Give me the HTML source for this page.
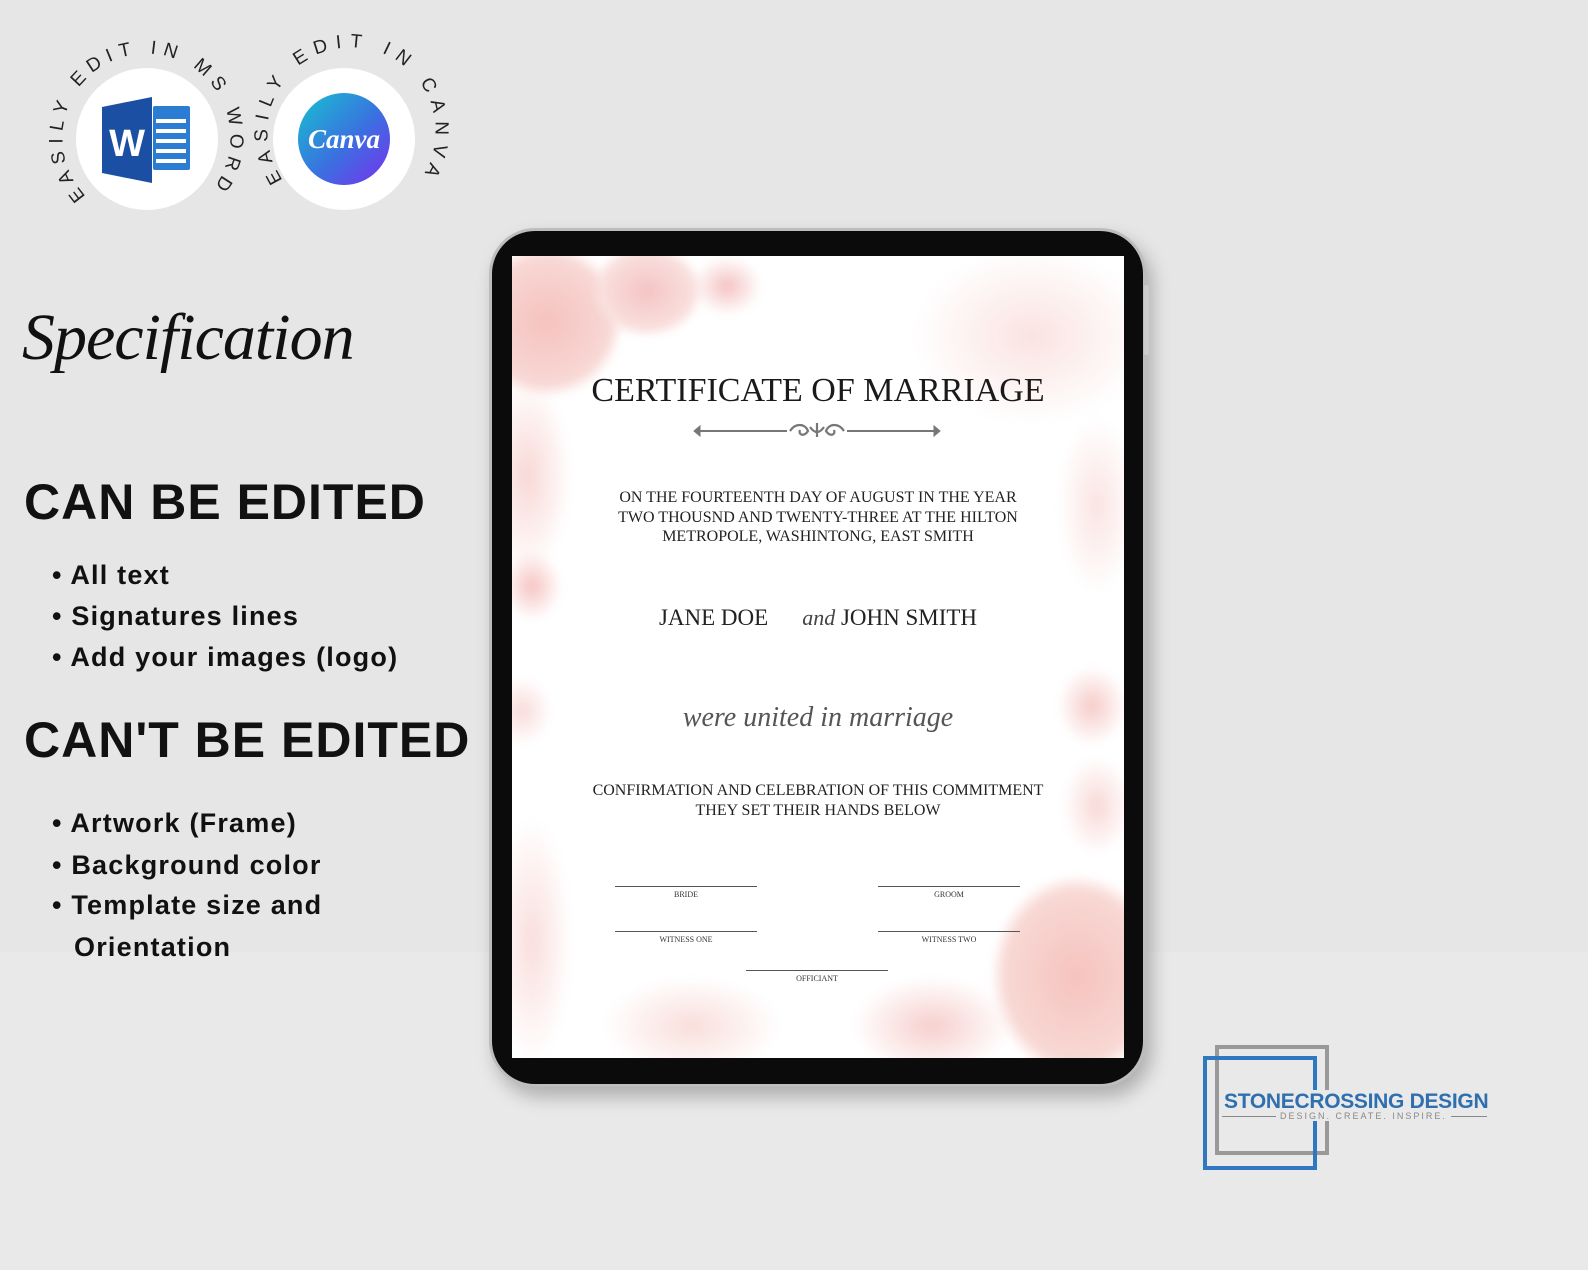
<!DOCTYPE html>
<html><head><meta charset="utf-8">
<style>
*{margin:0;padding:0;box-sizing:border-box}
body{width:1588px;height:1270px;overflow:hidden;background:#e6e6e6;font-family:"Liberation Sans",sans-serif;position:relative}
.floor{position:absolute;left:0;top:952px;width:1588px;height:318px;background:#e9e9e9}
.abs{position:absolute}
.h{font-weight:bold;font-size:50px;letter-spacing:1px;color:#111;left:24px}
.b{font-size:27px;color:#111;left:52px;letter-spacing:1.2px;font-weight:bold}
.tab{left:489px;top:228px;width:657px;height:859px;background:#0b0b0b;border-radius:46px;box-shadow:6px 10px 18px rgba(0,0,0,.25);border:3px solid #bdbdbd}
.scr{left:512px;top:256px;width:612px;height:802px;background:#fff;overflow:hidden}
.serif{font-family:"Liberation Serif",serif;color:#222;text-align:center;position:absolute;width:612px;left:0}
.fl{position:absolute;border-radius:50%;filter:blur(4px)}
.line{position:absolute;border-top:1px solid #555;width:142px}
.lab{position:absolute;font-family:"Liberation Serif",serif;font-size:8px;color:#333;width:142px;text-align:center}
</style></head><body>
<div class="floor"></div>

<svg class="abs" style="left:30px;top:20px" width="450" height="210" viewBox="30 20 450 210">
<defs>
<path id="c1" d="M86,196 A84,84 0 1,1 212,190"/>
<path id="c2" d="M283,180 A84,84 0 1,1 420,180"/>
<linearGradient id="cg" x1="0" y1="0" x2="1" y2="1"><stop offset="0" stop-color="#16c3cf"/><stop offset=".55" stop-color="#3b6fe0"/><stop offset="1" stop-color="#7a2ff0"/></linearGradient>
</defs>
<circle cx="147" cy="139" r="71" fill="#fff"/>
<circle cx="344" cy="139" r="71" fill="#fff"/>
<text font-family="Liberation Sans" font-size="19" letter-spacing="6.8" fill="#222"><textPath href="#c1">EASILY EDIT IN MS WORD</textPath></text>
<text font-family="Liberation Sans" font-size="19" letter-spacing="8" fill="#222"><textPath href="#c2">EASILY EDIT IN CANVA</textPath></text>
<rect x="153" y="106" width="37" height="64" rx="2" fill="#2b7cd3"/>
<g fill="#fff"><rect x="156" y="119" width="30" height="4"/><rect x="156" y="129" width="30" height="4"/><rect x="156" y="139" width="30" height="4"/><rect x="156" y="149" width="30" height="4"/><rect x="156" y="159" width="30" height="4"/></g>
<polygon points="102,107 152,97 152,183 102,173" fill="#1a4fa3"/>
<text x="127" y="156" text-anchor="middle" font-family="Liberation Sans" font-weight="bold" font-size="38" fill="#fff">W</text>
<circle cx="344" cy="139" r="46" fill="url(#cg)"/>
<text x="344" y="148" text-anchor="middle" font-family="Liberation Serif" font-style="italic" font-weight="bold" font-size="27" fill="#fff">Canva</text>
</svg>

<div class="abs" style="left:22px;top:300px;font-family:'Liberation Serif',serif;font-style:italic;font-size:66px;color:#111;letter-spacing:-1px">Specification</div>
<div class="abs h" style="top:473px">CAN BE EDITED</div>
<div class="abs b" style="top:560px">• All text</div>
<div class="abs b" style="top:601px">• Signatures lines</div>
<div class="abs b" style="top:642px">• Add your images (logo)</div>
<div class="abs h" style="top:711px">CAN'T BE EDITED</div>
<div class="abs b" style="top:808px">• Artwork (Frame)</div>
<div class="abs b" style="top:850px">• Background color</div>
<div class="abs b" style="top:890px">• Template size and</div>
<div class="abs b" style="top:932px;left:74px">Orientation</div>

<div class="abs tab"></div>
<div class="abs" style="left:1144px;top:285px;width:5px;height:70px;background:#ccc;border-radius:2px"></div>
<div class="abs scr">
  <div class="fl" style="left:-40px;top:-10px;width:150px;height:150px;background:radial-gradient(#f5c2bf,#f8d8d5 60%,rgba(255,255,255,0) 72%)"></div>
  <div class="fl" style="left:80px;top:-10px;width:110px;height:90px;background:radial-gradient(#f4c4c4,#f9e0de 60%,rgba(255,255,255,0) 72%)"></div>
  <div class="fl" style="left:180px;top:0;width:70px;height:60px;background:radial-gradient(#f4c2c1,rgba(255,255,255,0) 70%)"></div>
  <div class="fl" style="left:-30px;top:120px;width:90px;height:200px;background:radial-gradient(#f8d8d5,rgba(255,255,255,0) 70%)"></div>
  <div class="fl" style="left:-10px;top:295px;width:60px;height:70px;background:radial-gradient(#f5c4c1,rgba(255,255,255,0) 70%)"></div>
  <div class="fl" style="left:-20px;top:420px;width:60px;height:70px;background:radial-gradient(#f8dbd9,rgba(255,255,255,0) 70%)"></div>
  <div class="fl" style="left:-20px;top:560px;width:80px;height:250px;background:radial-gradient(#f9dedc,rgba(255,255,255,0) 70%)"></div>
  <div class="fl" style="left:90px;top:720px;width:180px;height:100px;background:radial-gradient(#f9dedb,rgba(255,255,255,0) 70%)"></div>
  <div class="fl" style="left:340px;top:720px;width:160px;height:100px;background:radial-gradient(#f6cfcd,rgba(255,255,255,0) 70%)"></div>
  <div class="fl" style="left:480px;top:620px;width:170px;height:200px;background:radial-gradient(#f5c3bf,#f8d8d4 60%,rgba(255,255,255,0) 72%)"></div>
  <div class="fl" style="left:400px;top:-10px;width:240px;height:180px;background:radial-gradient(#fae3e1,rgba(255,255,255,0) 70%)"></div>
  <div class="fl" style="left:545px;top:160px;width:80px;height:180px;background:radial-gradient(#fae4e2,rgba(255,255,255,0) 70%)"></div>
  <div class="fl" style="left:545px;top:410px;width:70px;height:80px;background:radial-gradient(#f6cbc8,rgba(255,255,255,0) 70%)"></div>
  <div class="fl" style="left:550px;top:500px;width:70px;height:100px;background:radial-gradient(#f8d9d7,rgba(255,255,255,0) 70%)"></div>
  <div class="serif" style="top:116px;font-size:34px;color:#1a1a1a">CERTIFICATE OF MARRIAGE</div>
  <svg class="abs" style="left:180px;top:165px" width="250" height="20"><g fill="#777" stroke="#777"><line x1="6" y1="10" x2="95" y2="10" stroke-width="2"/><line x1="155" y1="10" x2="244" y2="10" stroke-width="2"/><polygon points="2,10 8,5 8,15"/><polygon points="248,10 242,5 242,15"/><path d="M98,10 c5,-8 15,-8 18,0 c-4,6 -10,4 -8,-1 M152,10 c-5,-8 -15,-8 -18,0 c4,6 10,4 8,-1 M118,6 q7,10 14,0 M125,2 v14" fill="none" stroke-width="2.2"/></g></svg>
  <div class="serif" style="top:232px;font-size:16px;line-height:19.5px">ON THE FOURTEENTH DAY OF AUGUST IN THE YEAR<br>TWO THOUSND AND TWENTY-THREE AT THE HILTON<br>METROPOLE, WASHINTONG, EAST SMITH</div>
  <div class="serif" style="top:349px;font-size:23px"><span style="margin-right:34px">JANE DOE</span><i style="font-size:22px;color:#444">and</i> JOHN SMITH</div>
  <div class="serif" style="top:446px;font-size:28px;font-style:italic;color:#555">were united in marriage</div>
  <div class="serif" style="top:525px;font-size:16px;line-height:19.5px">CONFIRMATION AND CELEBRATION OF THIS COMMITMENT<br>THEY SET THEIR HANDS BELOW</div>
  <div class="line" style="left:103px;top:630px"></div><div class="lab" style="left:103px;top:634px">BRIDE</div>
  <div class="line" style="left:366px;top:630px"></div><div class="lab" style="left:366px;top:634px">GROOM</div>
  <div class="line" style="left:103px;top:675px"></div><div class="lab" style="left:103px;top:679px">WITNESS ONE</div>
  <div class="line" style="left:366px;top:675px"></div><div class="lab" style="left:366px;top:679px">WITNESS TWO</div>
  <div class="line" style="left:234px;top:714px"></div><div class="lab" style="left:234px;top:718px">OFFICIANT</div>
</div>

<div class="abs" style="left:1215px;top:1045px;width:114px;height:110px;border:4px solid #999"></div>
<div class="abs" style="left:1203px;top:1056px;width:114px;height:114px;border:4px solid #2f78c0"></div>
<div class="abs" style="left:1222px;top:1090px;background:#e9e9e9;font-weight:bold;font-size:21px;color:#2f6fb0;letter-spacing:-.3px;padding:0 2px">STONECROSSING DESIGN</div>
<div class="abs" style="left:1222px;top:1116px;width:265px;border-top:1px solid #888"></div>
<div class="abs" style="left:1276px;top:1111px;background:#e9e9e9;font-size:9px;color:#888;letter-spacing:2px;padding:0 4px">DESIGN. CREATE. INSPIRE.</div>
</body></html>
